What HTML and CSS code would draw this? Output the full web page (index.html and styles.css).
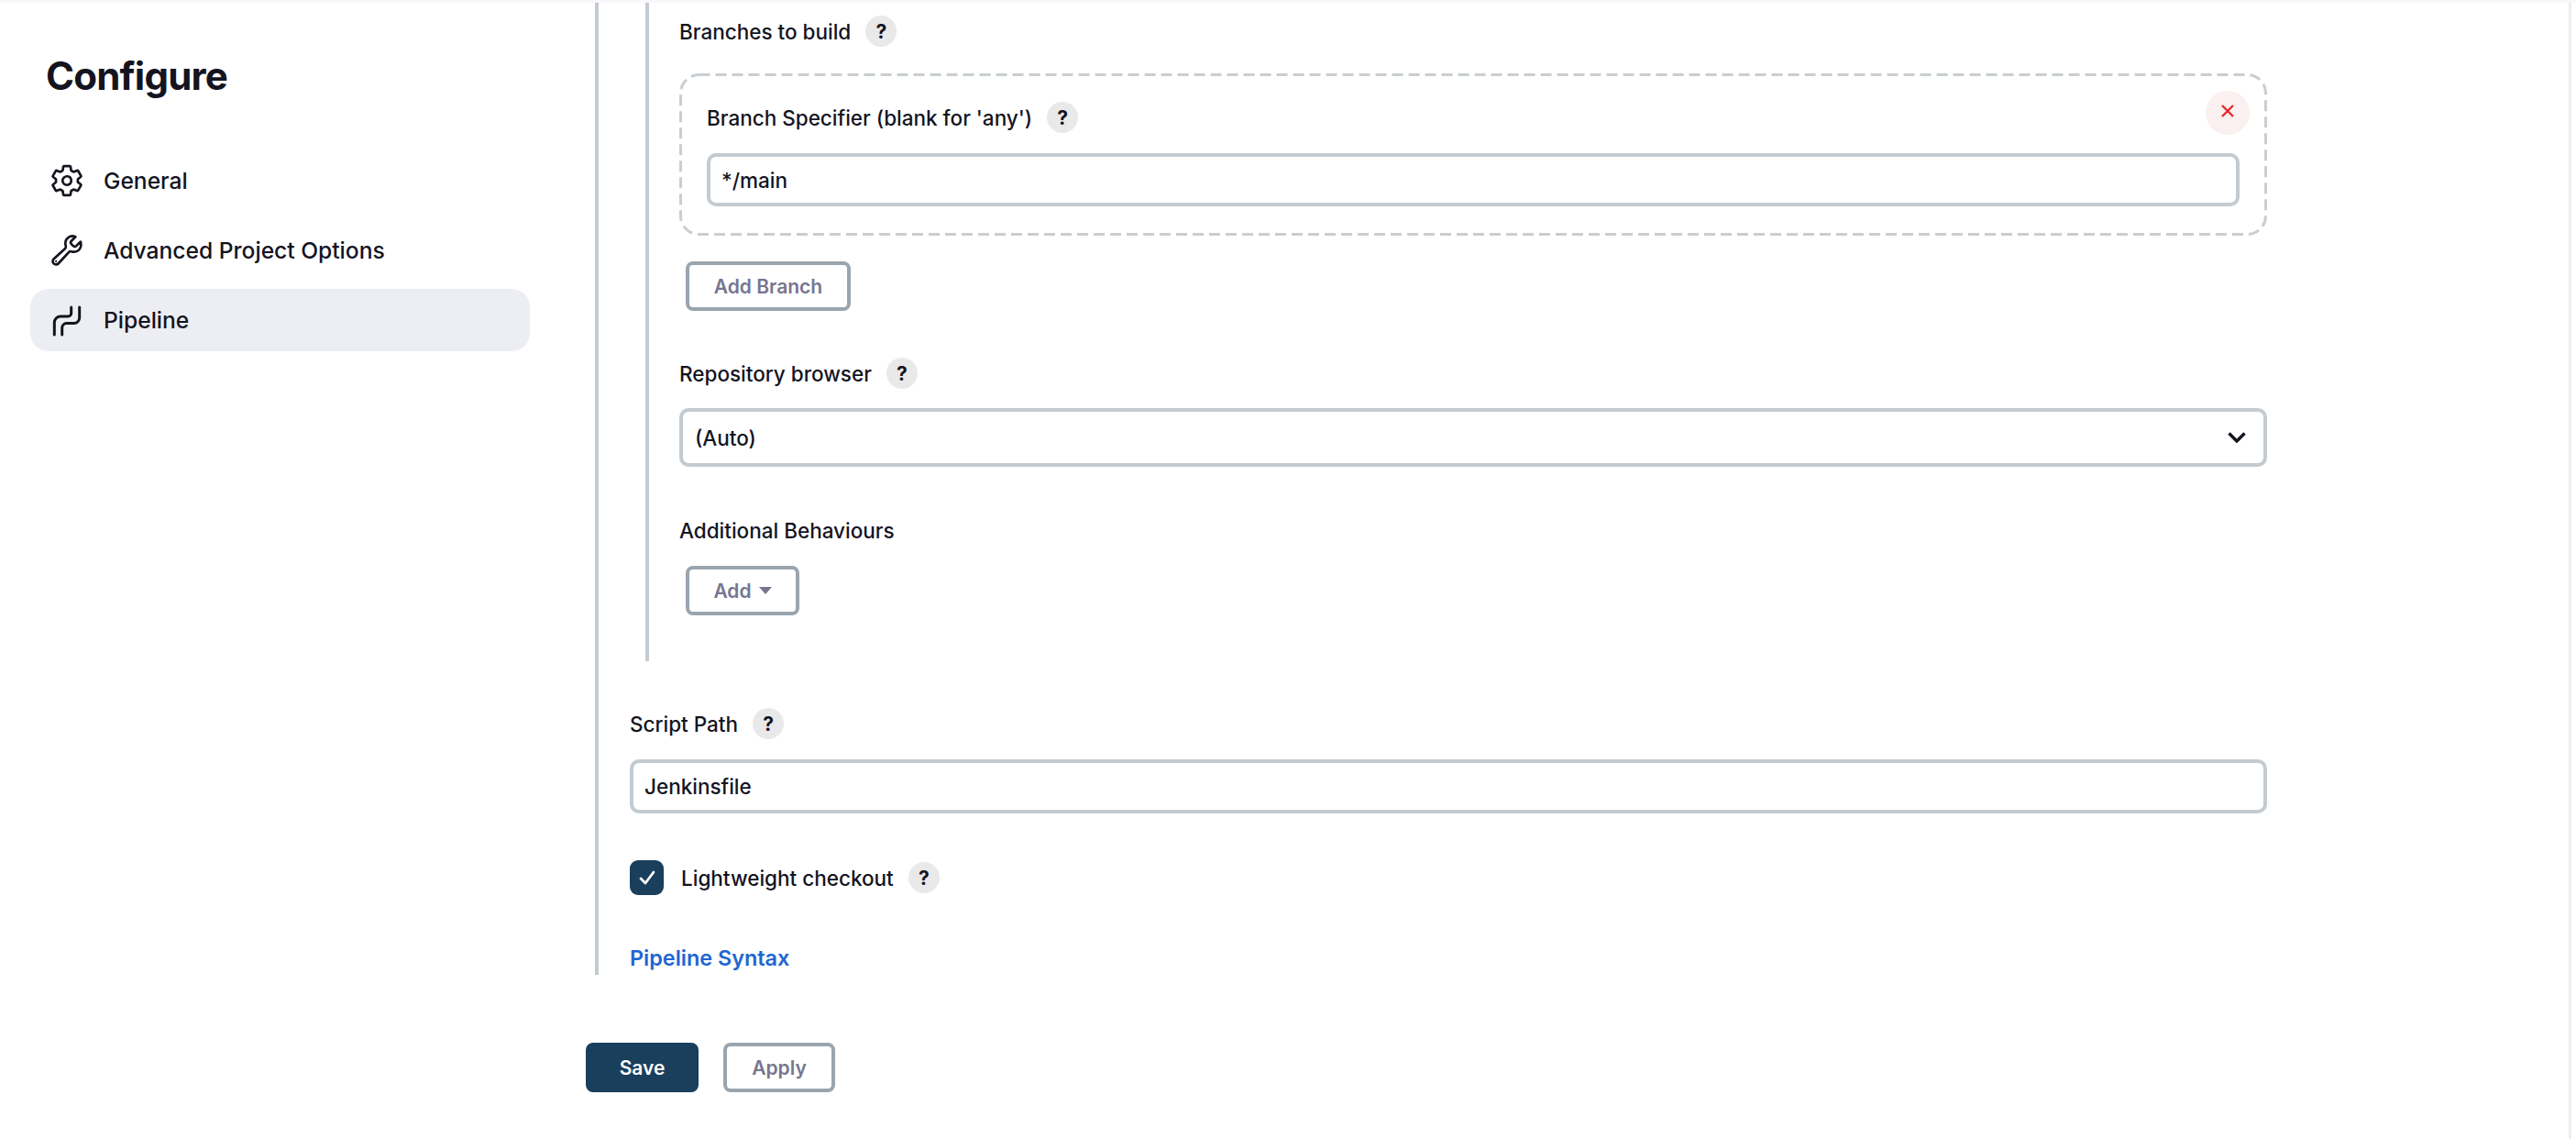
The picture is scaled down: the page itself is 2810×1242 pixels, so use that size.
FILE: index.html
```html
<!DOCTYPE html>
<html lang="en">
<head>
<meta charset="utf-8">
<title>Configure</title>
<link rel="stylesheet" href="styles.css">
</head>
<body>
<div class="top-strip"></div>
<div class="layout">
  <aside class="side">
    <h1 class="side-title">Configure</h1>
    <nav class="side-nav">
      <a class="side-item">
        <svg class="side-icon" viewBox="0 0 512 512"><path class="line" d="M262.29 192.31a64 64 0 1057.4 57.4 64.13 64.13 0 00-57.4-57.4zM416.39 256a154.34 154.34 0 01-1.53 20.79l45.21 35.46a10.81 10.81 0 012.45 13.75l-42.77 74a10.81 10.81 0 01-13.14 4.59l-44.9-18.08a16.11 16.11 0 00-15.17 1.75A164.48 164.48 0 01325 400.8a15.94 15.94 0 00-8.82 12.14l-6.73 47.89a11.08 11.08 0 01-10.68 9.17h-85.54a11.11 11.11 0 01-10.69-8.87l-6.72-47.82a16.07 16.07 0 00-9-12.22 155.3 155.3 0 01-21.46-12.57 16 16 0 00-15.11-1.71l-44.89 18.07a10.81 10.81 0 01-13.14-4.58l-42.77-74a10.8 10.8 0 012.45-13.75l38.21-30a16.05 16.05 0 006-14.08c-.36-4.17-.58-8.33-.58-12.5s.21-8.27.58-12.35a16 16 0 00-6.07-13.94l-38.19-30A10.81 10.81 0 0149.48 186l42.77-74a10.81 10.81 0 0113.14-4.59l44.9 18.08a16.11 16.11 0 0015.17-1.75A164.48 164.48 0 01187 111.2a15.94 15.94 0 008.82-12.14l6.73-47.89A11.08 11.08 0 01213.23 42h85.54a11.11 11.11 0 0110.69 8.87l6.72 47.82a16.07 16.07 0 009 12.22 155.3 155.3 0 0121.46 12.57 16 16 0 0015.11 1.71l44.89-18.07a10.81 10.81 0 0113.14 4.58l42.77 74a10.8 10.8 0 01-2.45 13.75l-38.21 30a16.05 16.05 0 00-6.07 14.08c.33 4.14.55 8.3.55 12.47z"/></svg>
        <span>General</span>
      </a>
      <a class="side-item">
        <svg class="side-icon" viewBox="0 0 512 512"><path class="line" d="M393.87 190a32.1 32.1 0 01-45.25 0l-26.57-26.57a32.09 32.09 0 010-45.26L382.19 58a1 1 0 00-.3-1.64c-38.82-16.64-89.15-8.16-121.11 23.57-30.58 30.35-32.32 76-21.12 115.84a31.93 31.93 0 01-9.06 32.08L64 380a48.17 48.17 0 1068 68l153.86-167a31.93 31.93 0 0131.6-9.13c39.54 10.59 84.54 8.6 114.72-21.19 32.49-32 39.5-88.56 23.75-120.93a1 1 0 00-1.6-.26z"/><circle class="dot" cx="96" cy="416" r="14"/></svg>
        <span>Advanced Project Options</span>
      </a>
      <a class="side-item is-active">
        <svg class="side-icon" viewBox="-1 -1 38 38"><path class="pipe" d="M31.7 4v11.5a6 6 0 0 1-6 6H17.7a5 5 0 0 0-5 5V34"/><path class="pipe" d="M22.7 4v6.5a3.5 3.5 0 0 1-3.5 3.5H11a6.7 6.7 0 0 0-6.7 6.7V34"/></svg>
        <span>Pipeline</span>
      </a>
    </nav>
  </aside>

  <main class="main">
    <section class="outer">
      <div class="inner">
        <div class="label-row"><span>Branches to build</span><span class="help">?</span></div>
        <div class="repeat">
          <svg class="dash" viewBox="0 0 1732 177"><rect x="1.5" y="1.5" width="1729" height="174" rx="20"/></svg>
          <button class="close" type="button" aria-label="Delete">
            <svg viewBox="0 0 14 14"><path d="M1 1l12 12M13 1L1 13"/></svg>
          </button>
          <div class="label-row"><span>Branch Specifier (blank for 'any')</span><span class="help">?</span></div>
          <input class="field" type="text" value="*/main">
        </div>
        <button class="btn btn-branch" type="button">Add Branch</button>
        <div class="label-row label-repo"><span>Repository browser</span><span class="help">?</span></div>
        <div class="select">
          <span>(Auto)</span>
          <svg class="chev" viewBox="0 0 20 12"><path d="M1.5 1.5L10 10l8.5-8.5"/></svg>
        </div>
        <div class="label-row label-behav"><span>Additional Behaviours</span></div>
        <button class="btn btn-add" type="button">Add<i class="caret"></i></button>
      </div>
      <div class="label-row label-script"><span>Script Path</span><span class="help">?</span></div>
      <input class="field" type="text" value="Jenkinsfile">
      <div class="check-row">
        <span class="checkbox"><svg viewBox="0 0 18 16"><path d="M2 9l5 5 9-12"/></svg></span>
        <span>Lightweight checkout</span>
        <span class="help">?</span>
      </div>
      <a class="syntax">Pipeline Syntax</a>
    </section>
    <div class="actions">
      <button class="btn btn-save" type="button">Save</button>
      <button class="btn btn-apply" type="button">Apply</button>
    </div>
  </main>
</div>
</body>
</html>
```
FILE: styles.css
```css
* { box-sizing: border-box; }
html, body { margin: 0; height: 100%; }
body {
  font-family: Inter, "Liberation Sans", sans-serif;
  font-size: 22.5px;
  font-weight: 450;
  color: #14141f;
  background: #fff;
  overflow: hidden;
}
.top-strip { height: 3px; background: #f8f8fa; }
.layout { display: flex; width: 2805px; height: 1239px; border-right: 3px solid #eeeef0; }
.side { width: 639px; flex: none; padding: 0 0 0 33px; }
.side-title { margin: 0; padding: 56px 0 0 17px; font-size: 42px; line-height: 48px; font-weight: 700; letter-spacing: -0.8px; height: 160px; }
.side-nav { display: flex; flex-direction: column; gap: 8px; width: 545px; }
.side-item { display: flex; align-items: center; gap: 21px; height: 68px; padding-left: 21px; border-radius: 20px; font-size: 24.6px; }
.side-item.is-active { background: #edeef3; }
.side-icon { width: 38px; height: 38px; flex: none; }
.line { fill: none; stroke: #14141f; stroke-width: 36; stroke-linecap: round; stroke-linejoin: round; }
.dot { fill: #14141f; }
.pipe { fill: none; stroke: #14141f; stroke-width: 3; stroke-linecap: round; stroke-linejoin: round; }
.main { flex: 1; padding-left: 10px; }
.outer { width: 1824px; height: 1060px; border-left: 4px solid #c3cbd0; padding-left: 34px; }
.inner { height: 718px; margin-left: 17px; border-left: 4px solid #c3cbd0; padding-left: 33px; padding-top: 14px; }
.label-row { display: flex; align-items: center; gap: 16px; height: 34px; }
.help { width: 34px; height: 34px; border-radius: 50%; background: #e9e9e9; font-size: 21px; font-weight: 700; display: flex; align-items: center; justify-content: center; }
.repeat { position: relative; height: 177px; margin-top: 29px; padding: 31px 30px 0 30px; }
.dash { position: absolute; inset: 0; width: 100%; height: 100%; fill: none; stroke: #c8ced2; stroke-width: 3; stroke-dasharray: 12 6; }
.field { display: block; width: 100%; height: 58px; border: 4px solid #c3cbd0; border-radius: 10px; padding: 0 12px; font: 450 22.5px Inter, "Liberation Sans", sans-serif; color: #14141f; background: #fff; outline: none; }
.repeat .field { margin-top: 22px; position: relative; }
.close { position: absolute; top: 19px; right: 19px; width: 48px; height: 48px; border: 0; padding: 0; border-radius: 50%; background: #fbf0f0; display: flex; align-items: center; justify-content: center; }
.close svg { width: 14px; height: 14px; margin-bottom: 4px; fill: none; stroke: #e6292f; stroke-width: 2.4; }
.btn { display: flex; align-items: center; justify-content: center; height: 54px; border: 4px solid #9aa5ae; border-radius: 8px; background: #fff; color: #77768f; font: 600 21px Inter, "Liberation Sans", sans-serif; padding: 0; }
.btn-branch { width: 180px; margin: 28px 0 0 7px; }
.label-repo { margin-top: 51px; }
.select { height: 64px; margin-top: 21px; border: 4px solid #c3cbd0; border-radius: 10px; padding: 0 19px 0 13px; display: flex; align-items: center; justify-content: space-between; }
.chev { width: 20px; height: 12px; fill: none; stroke: #14141f; stroke-width: 3.4; }
.label-behav { margin-top: 52px; }
.btn-add { width: 124px; margin: 22px 0 0 7px; gap: 8px; }
.caret { width: 0; height: 0; border-left: 7.5px solid transparent; border-right: 7.5px solid transparent; border-top: 8px solid #77768f; }
.label-script { margin-top: 51px; }
.outer > .field { margin-top: 22px; height: 59px; }
.check-row { display: flex; align-items: center; margin-top: 51px; height: 38px; }
.checkbox { width: 37px; height: 38px; border-radius: 9px; background: #193f5c; display: flex; align-items: center; justify-content: center; margin-right: 19px; }
.checkbox svg { width: 18px; height: 16px; fill: none; stroke: #fff; stroke-width: 2.8; stroke-linecap: round; stroke-linejoin: round; }
.check-row .help { margin-left: 16px; }
.syntax { display: block; margin-top: 54px; color: #2166d1; font-size: 23.4px; font-weight: 600; line-height: 30px; }
.actions { display: flex; gap: 27px; margin-top: 74px; margin-left: -10px; }
.btn-save { width: 123px; background: #193f5c; border-color: #193f5c; color: #fff; }
.btn-apply { width: 122px; }
```
